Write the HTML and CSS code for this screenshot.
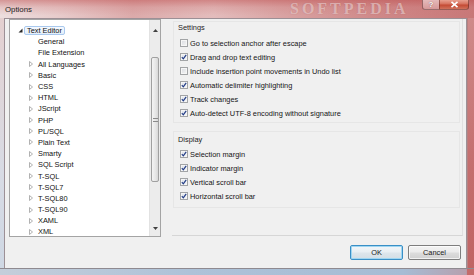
FILE: index.html
```html
<!DOCTYPE html>
<html>
<head>
<meta charset="utf-8">
<link rel="stylesheet" href="styles.css">
</head>
<body>
<div class="window">
  <div class="titlebar">
    <span class="title">Options</span>
    <span class="watermark">SOFTPEDIA</span>
    <div class="caption-btns">
      <div class="cbtn help">?</div>
      <div class="cbtn close"><svg width="9" height="7" viewBox="0 0 9 7"><path d="M1.5 0.8 L7.5 6.2 M7.5 0.8 L1.5 6.2" stroke="#fff" stroke-width="1.6"/></svg></div>
    </div>
  </div>
  <div class="frame-row">
    <div class="frame-left"></div>
    <div class="client">
      <div class="main">
        <div class="tree">
          <ul class="items">
            <li class="lvl0"><span class="exp"><svg width="5" height="5" viewBox="0 0 5 5"><polygon points="4.5,0.5 4.5,4.5 0.5,4.5" fill="#2a2a2a"/></svg></span><span class="lbl sel">Text Editor</span></li>
            <li class="lvl1"><span class="exp"></span><span class="lbl">General</span></li>
            <li class="lvl1"><span class="exp"></span><span class="lbl">File Extension</span></li>
            <li class="lvl1"><span class="exp"><svg width="4" height="6" viewBox="0 0 4 6"><polygon points="0.5,0.5 3.5,3 0.5,5.5" fill="none" stroke="#a8a8a8" stroke-width="0.9"/></svg></span><span class="lbl">All Languages</span></li>
            <li class="lvl1"><span class="exp"><svg width="4" height="6" viewBox="0 0 4 6"><polygon points="0.5,0.5 3.5,3 0.5,5.5" fill="none" stroke="#a8a8a8" stroke-width="0.9"/></svg></span><span class="lbl">Basic</span></li>
            <li class="lvl1"><span class="exp"><svg width="4" height="6" viewBox="0 0 4 6"><polygon points="0.5,0.5 3.5,3 0.5,5.5" fill="none" stroke="#a8a8a8" stroke-width="0.9"/></svg></span><span class="lbl">CSS</span></li>
            <li class="lvl1"><span class="exp"><svg width="4" height="6" viewBox="0 0 4 6"><polygon points="0.5,0.5 3.5,3 0.5,5.5" fill="none" stroke="#a8a8a8" stroke-width="0.9"/></svg></span><span class="lbl">HTML</span></li>
            <li class="lvl1"><span class="exp"><svg width="4" height="6" viewBox="0 0 4 6"><polygon points="0.5,0.5 3.5,3 0.5,5.5" fill="none" stroke="#a8a8a8" stroke-width="0.9"/></svg></span><span class="lbl">JScript</span></li>
            <li class="lvl1"><span class="exp"><svg width="4" height="6" viewBox="0 0 4 6"><polygon points="0.5,0.5 3.5,3 0.5,5.5" fill="none" stroke="#a8a8a8" stroke-width="0.9"/></svg></span><span class="lbl">PHP</span></li>
            <li class="lvl1"><span class="exp"><svg width="4" height="6" viewBox="0 0 4 6"><polygon points="0.5,0.5 3.5,3 0.5,5.5" fill="none" stroke="#a8a8a8" stroke-width="0.9"/></svg></span><span class="lbl">PL/SQL</span></li>
            <li class="lvl1"><span class="exp"><svg width="4" height="6" viewBox="0 0 4 6"><polygon points="0.5,0.5 3.5,3 0.5,5.5" fill="none" stroke="#a8a8a8" stroke-width="0.9"/></svg></span><span class="lbl">Plain Text</span></li>
            <li class="lvl1"><span class="exp"><svg width="4" height="6" viewBox="0 0 4 6"><polygon points="0.5,0.5 3.5,3 0.5,5.5" fill="none" stroke="#a8a8a8" stroke-width="0.9"/></svg></span><span class="lbl">Smarty</span></li>
            <li class="lvl1"><span class="exp"><svg width="4" height="6" viewBox="0 0 4 6"><polygon points="0.5,0.5 3.5,3 0.5,5.5" fill="none" stroke="#a8a8a8" stroke-width="0.9"/></svg></span><span class="lbl">SQL Script</span></li>
            <li class="lvl1"><span class="exp"><svg width="4" height="6" viewBox="0 0 4 6"><polygon points="0.5,0.5 3.5,3 0.5,5.5" fill="none" stroke="#a8a8a8" stroke-width="0.9"/></svg></span><span class="lbl">T-SQL</span></li>
            <li class="lvl1"><span class="exp"><svg width="4" height="6" viewBox="0 0 4 6"><polygon points="0.5,0.5 3.5,3 0.5,5.5" fill="none" stroke="#a8a8a8" stroke-width="0.9"/></svg></span><span class="lbl">T-SQL7</span></li>
            <li class="lvl1"><span class="exp"><svg width="4" height="6" viewBox="0 0 4 6"><polygon points="0.5,0.5 3.5,3 0.5,5.5" fill="none" stroke="#a8a8a8" stroke-width="0.9"/></svg></span><span class="lbl">T-SQL80</span></li>
            <li class="lvl1"><span class="exp"><svg width="4" height="6" viewBox="0 0 4 6"><polygon points="0.5,0.5 3.5,3 0.5,5.5" fill="none" stroke="#a8a8a8" stroke-width="0.9"/></svg></span><span class="lbl">T-SQL90</span></li>
            <li class="lvl1"><span class="exp"><svg width="4" height="6" viewBox="0 0 4 6"><polygon points="0.5,0.5 3.5,3 0.5,5.5" fill="none" stroke="#a8a8a8" stroke-width="0.9"/></svg></span><span class="lbl">XAML</span></li>
            <li class="lvl1"><span class="exp"><svg width="4" height="6" viewBox="0 0 4 6"><polygon points="0.5,0.5 3.5,3 0.5,5.5" fill="none" stroke="#a8a8a8" stroke-width="0.9"/></svg></span><span class="lbl">XML</span></li>
          </ul>
          <div class="vscroll">
            <div class="sbtn up"><svg width="5" height="3" viewBox="0 0 5 3"><polygon points="0,3 2.5,0 5,3" fill="#404040"/></svg></div>
            <div class="strack-top"></div>
            <div class="thumb"><span class="grip"></span></div>
            <div class="strack-bottom"></div>
            <div class="sbtn down"><svg width="5" height="3" viewBox="0 0 5 3"><polygon points="0,0 5,0 2.5,3" fill="#404040"/></svg></div>
          </div>
        </div>
        <div class="right">
          <div class="group settings">
            <div class="glabel">Settings</div>
            <div class="row"><span class="cb"></span>Go to selection anchor after escape</div>
            <div class="row"><span class="cb on"><svg width="6" height="6" viewBox="0 0 6 6"><path d="M0.8 3.2 L2.3 4.8 L5.2 0.8" fill="none" stroke="#223c86" stroke-width="1.2"/></svg></span>Drag and drop text editing</div>
            <div class="row"><span class="cb"></span>Include insertion point movements in Undo list</div>
            <div class="row"><span class="cb on"><svg width="6" height="6" viewBox="0 0 6 6"><path d="M0.8 3.2 L2.3 4.8 L5.2 0.8" fill="none" stroke="#223c86" stroke-width="1.2"/></svg></span>Automatic delimiter highlighting</div>
            <div class="row"><span class="cb on"><svg width="6" height="6" viewBox="0 0 6 6"><path d="M0.8 3.2 L2.3 4.8 L5.2 0.8" fill="none" stroke="#223c86" stroke-width="1.2"/></svg></span>Track changes</div>
            <div class="row"><span class="cb on"><svg width="6" height="6" viewBox="0 0 6 6"><path d="M0.8 3.2 L2.3 4.8 L5.2 0.8" fill="none" stroke="#223c86" stroke-width="1.2"/></svg></span>Auto-detect UTF-8 encoding without signature</div>
          </div>
          <div class="group display">
            <div class="glabel">Display</div>
            <div class="row"><span class="cb on"><svg width="6" height="6" viewBox="0 0 6 6"><path d="M0.8 3.2 L2.3 4.8 L5.2 0.8" fill="none" stroke="#223c86" stroke-width="1.2"/></svg></span>Selection margin</div>
            <div class="row"><span class="cb on"><svg width="6" height="6" viewBox="0 0 6 6"><path d="M0.8 3.2 L2.3 4.8 L5.2 0.8" fill="none" stroke="#223c86" stroke-width="1.2"/></svg></span>Indicator margin</div>
            <div class="row"><span class="cb on"><svg width="6" height="6" viewBox="0 0 6 6"><path d="M0.8 3.2 L2.3 4.8 L5.2 0.8" fill="none" stroke="#223c86" stroke-width="1.2"/></svg></span>Vertical scroll bar</div>
            <div class="row"><span class="cb on"><svg width="6" height="6" viewBox="0 0 6 6"><path d="M0.8 3.2 L2.3 4.8 L5.2 0.8" fill="none" stroke="#223c86" stroke-width="1.2"/></svg></span>Horizontal scroll bar</div>
          </div>
        </div>
      </div>
      <div class="footer">
        <button class="btn ok">OK</button>
        <button class="btn">Cancel</button>
      </div>
    </div>
    <div class="frame-right"></div>
  </div>
  <div class="frame-bottom"></div>
</div>
</body>
</html>
```
FILE: styles.css
```css
* { box-sizing: border-box; margin: 0; padding: 0; }

body {
  width: 474px;
  height: 275px;
  overflow: hidden;
  font-family: "Liberation Sans", Arial, sans-serif;
  font-size: 7.4px;
  color: #1a1a1a;
  background: #c9a0a0;
}

.window {
  width: 474px;
  height: 275px;
  display: flex;
  flex-direction: column;
}

/* ---------- title bar ---------- */
.titlebar {
  height: 18px;
  position: relative;
  display: flex;
  align-items: center;
  padding-left: 5px;
  padding-right: 5px;
  background:
    linear-gradient(180deg, rgba(190, 80, 80, 0.5) 0, rgba(205, 120, 120, 0.25) 40%, rgba(235, 215, 215, 0) 85%),
    linear-gradient(90deg, #ecdede 0, #e8cccc 12%, #dcaaaa 28%, #e3bcbc 45%, #d9a2a2 60%, #cf8888 80%, #c87878 100%);
}

.title {
  font-size: 7.8px;
  color: #202020;
  line-height: 10px;
  margin-top: 1px;
}

.watermark {
  position: absolute;
  left: 290px;
  top: 0;
  font-family: "Liberation Serif", serif;
  font-weight: bold;
  font-size: 16px;
  letter-spacing: 3px;
  color: rgba(255, 242, 242, 0.5);
  text-shadow: 0 0 1px rgba(120, 40, 40, 0.3);
}

.caption-btns {
  margin-left: auto;
  align-self: flex-start;
  display: flex;
}

.cbtn {
  height: 10px;
  display: flex;
  align-items: center;
  justify-content: center;
  border: 1px solid rgba(90, 40, 40, 0.55);
  border-top: none;
}

.help {
  width: 17px;
  border-radius: 0 0 0 3px;
  border-right: none;
  background: linear-gradient(180deg, rgba(255, 255, 255, 0.55), rgba(230, 190, 190, 0.4));
  color: #fff;
  font-size: 8px;
  font-weight: bold;
  text-shadow: 0 0 1px #6a3a3a;
}

.close {
  width: 30px;
  border-radius: 0 0 3px 0;
  background: linear-gradient(180deg, #e8a090 0, #d6705c 45%, #c44a34 55%, #d0705a 100%);
}

/* ---------- frame ---------- */
.frame-row {
  display: flex;
  height: 250px;
}

.frame-left {
  width: 4px;
  background: linear-gradient(180deg, #e4d0d0, #d8dbe4 60%, #cfd8e4);
}

.frame-right {
  width: 7px;
  background: linear-gradient(180deg, #cf8a8a, #c46e6e 60%, #c06464);
  border-left: 1px solid #b88080;
}

.frame-bottom {
  height: 7px;
  border-top: 1px solid #8f8a90;
  background: linear-gradient(90deg, #c4ceda 0, #aec2d8 40%, #a6bcd4 85%, #b6a0ae 98.4%, #c46b6b 98.6%);
}

/* ---------- client ---------- */
.client {
  width: 463px;
  background: #f0f0f0;
  border: 1px solid #9c9096;
  border-bottom: none;
  display: flex;
  flex-direction: column;
}

.main {
  display: flex;
  gap: 11px;
  padding-left: 4px;
  height: 218px;
}

/* tree */
.tree {
  width: 152px;
  height: 218px;
  border: 1px solid #a4a4a4;
  background: #fff;
  display: flex;
  overflow: hidden;
}

.items {
  flex: 1;
  list-style: none;
  padding-top: 5px;
  color: #111;
}

.items li {
  height: 11.2px;
  display: flex;
  align-items: center;
  white-space: nowrap;
}

.lvl0 { padding-left: 8px; }
.lvl1 { padding-left: 19px; }

.exp {
  width: 5px;
  height: 6px;
  display: flex;
  align-items: center;
}

.lbl {
  margin-left: 1px;
  height: 9px;
  line-height: 7px;
  padding: 0 2px;
  border: 1px solid transparent;
  border-radius: 2px;
}

.sel {
  border-color: #a9c9ee;
  background: linear-gradient(180deg, #f5f9fe, #e3eefb);
}

/* scrollbar */
.vscroll {
  width: 11px;
  display: flex;
  flex-direction: column;
  background: #ececec;
  border-left: 1px solid #e2e2e2;
}

.sbtn {
  display: flex;
  align-items: center;
  justify-content: center;
}

.sbtn.up { height: 20px; }
.sbtn.down { height: 16px; }

.strack-top { height: 17px; }
.strack-bottom { flex: 1; }

.thumb {
  height: 125px;
  margin: 0 1px;
  border: 1px solid #a0a0a0;
  border-radius: 2px;
  background: linear-gradient(90deg, #f4f4f4, #e6e6e6 60%, #d8d8d8);
  display: flex;
  align-items: center;
  justify-content: center;
}

.grip {
  width: 5px;
  height: 4px;
  border-top: 1px solid #8a8a8a;
  border-bottom: 1px solid #8a8a8a;
}

/* right side */
.right {
  width: 291px;
  height: 217px;
  padding-left: 1px;
  padding-top: 2px;
  border-bottom: 1px solid #d6d6d6;
  border-right: 1px solid #e0e0e0;
}

.group {
  width: 287px;
  border: 1px solid #e6e6e6;
  padding-left: 4px;
}

.settings {
  padding-bottom: 2px;
}

.display {
  margin-top: 8px;
  padding-bottom: 4px;
}

.glabel {
  height: 10px;
  line-height: 10px;
  color: #1e1e1e;
}

.settings .glabel { margin-top: 1px; margin-bottom: 3px; }
.display .glabel { margin-top: 3px; margin-bottom: 2px; }

.row {
  height: 14px;
  display: flex;
  align-items: center;
  padding-left: 2px;
  white-space: nowrap;
  color: #151515;
}

.cb {
  width: 8px;
  height: 8px;
  margin-right: 2px;
  border: 1px solid #a2a4a6;
  background: linear-gradient(135deg, #d8dbe0, #f6f6f6);
  box-shadow: inset 0 0 0 1px #f6f6f6;
  display: flex;
  align-items: center;
  justify-content: center;
}

.cb.on {
  background: linear-gradient(135deg, #dbe0e7, #f6f7f9);
}

/* footer */
.footer {
  display: flex;
  justify-content: flex-end;
  gap: 5px;
  padding-top: 8px;
  padding-right: 5px;
}

.btn {
  width: 53px;
  height: 15px;
  border: 1px solid #7d7d7d;
  border-radius: 2px;
  font-family: inherit;
  font-size: 7.4px;
  color: #1a1a1a;
  background: linear-gradient(180deg, #f3f3f3 0, #ebebeb 48%, #dddddd 52%, #d0d0d0 100%);
  box-shadow: inset 0 0 0 1px rgba(255, 255, 255, 0.7);
}

.btn.ok {
  border-color: #3a8fc6;
  background: linear-gradient(180deg, #f2f6f9 0, #e8eef3 48%, #dde6ec 52%, #d4dee6 100%);
  box-shadow: inset 0 0 0 1px #9fd6f2;
}
```
